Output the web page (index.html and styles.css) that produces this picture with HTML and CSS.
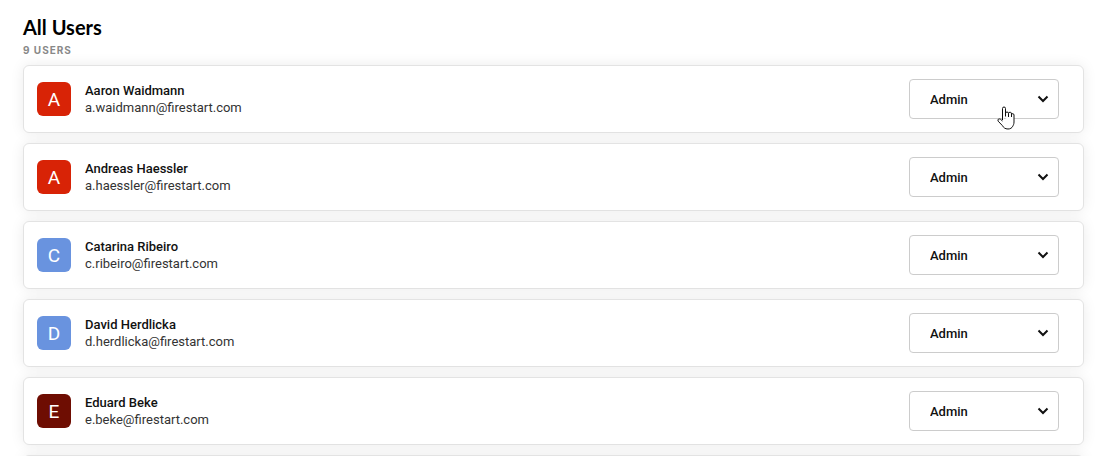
FILE: index.html
```html
<!DOCTYPE html>
<html lang="en">
<head>
    <meta charset="UTF-8">
    <meta name="viewport" content="width=device-width, initial-scale=1.0">
    <title>All Users</title>
    <link rel="stylesheet" href="styles.css">
</head>
<body>
    <main class="users">
        <h1 class="users-title">All Users</h1>
        <p class="users-count">9 users</p>

        <ul class="user-list">
            <li class="user-card">
                <span class="avatar avatar-red" aria-hidden="true">A</span>
                <div class="user-info">
                    <label class="user-name" for="role-1">Aaron Waidmann</label>
                    <span class="user-email">a.waidmann@firestart.com</span>
                </div>
                <div class="role">
                    <select class="role-select" id="role-1">
                        <option>Admin</option>
                    </select>
                    <svg class="role-arrow" viewBox="0 0 12 8" aria-hidden="true"><path d="M1.5 1.5 6 6l4.5-4.5"/></svg>
                    <svg class="pointer" viewBox="0 0 18 24" aria-hidden="true"><path d="M5.500 14V2.500a1.500 1.500 0 0 1 3 0V10.500M8.500 7.500a1.400 1.400 0 0 1 3 0v3.500M11.500 7.500a1.400 1.400 0 0 1 3 .5v3M14.500 8.500a1.300 1.300 0 0 1 2.500.5V16c0 2-.6 3-1.200 4.200-.9 1.800-2.500 2.800-4.800 2.800-3 0-4.500-1.500-5.700-3.500L1.200 15.200c-1-1.700.6-3 2.200-2L5.500 15"/></svg>
                </div>
            </li>
            <li class="user-card">
                <span class="avatar avatar-red" aria-hidden="true">A</span>
                <div class="user-info">
                    <label class="user-name" for="role-2">Andreas Haessler</label>
                    <span class="user-email">a.haessler@firestart.com</span>
                </div>
                <div class="role">
                    <select class="role-select" id="role-2">
                        <option>Admin</option>
                    </select>
                    <svg class="role-arrow" viewBox="0 0 12 8" aria-hidden="true"><path d="M1.5 1.5 6 6l4.5-4.5"/></svg>
                </div>
            </li>
            <li class="user-card">
                <span class="avatar avatar-blue" aria-hidden="true">C</span>
                <div class="user-info">
                    <label class="user-name" for="role-3">Catarina Ribeiro</label>
                    <span class="user-email">c.ribeiro@firestart.com</span>
                </div>
                <div class="role">
                    <select class="role-select" id="role-3">
                        <option>Admin</option>
                    </select>
                    <svg class="role-arrow" viewBox="0 0 12 8" aria-hidden="true"><path d="M1.5 1.5 6 6l4.5-4.5"/></svg>
                </div>
            </li>
            <li class="user-card">
                <span class="avatar avatar-blue" aria-hidden="true">D</span>
                <div class="user-info">
                    <label class="user-name" for="role-4">David Herdlicka</label>
                    <span class="user-email">d.herdlicka@firestart.com</span>
                </div>
                <div class="role">
                    <select class="role-select" id="role-4">
                        <option>Admin</option>
                    </select>
                    <svg class="role-arrow" viewBox="0 0 12 8" aria-hidden="true"><path d="M1.5 1.5 6 6l4.5-4.5"/></svg>
                </div>
            </li>
            <li class="user-card">
                <span class="avatar avatar-maroon" aria-hidden="true">E</span>
                <div class="user-info">
                    <label class="user-name" for="role-5">Eduard Beke</label>
                    <span class="user-email">e.beke@firestart.com</span>
                </div>
                <div class="role">
                    <select class="role-select" id="role-5">
                        <option>Admin</option>
                    </select>
                    <svg class="role-arrow" viewBox="0 0 12 8" aria-hidden="true"><path d="M1.5 1.5 6 6l4.5-4.5"/></svg>
                </div>
            </li>
            <li class="user-card"></li>
        </ul>
    </main>
</body>
</html>
```
FILE: styles.css
```css
* {
    box-sizing: border-box;
}

body {
    margin: 0;
    height: 100vh;
    overflow: hidden;
    background: #fff;
    color: #111;
    font-family: Roboto, "Liberation Sans", sans-serif;
    font-size: 13px;
}

.users {
    padding: 14px 21px 0 23px;
}

.users-title {
    margin: 0;
    font-family: Lato, "Open Sans", sans-serif;
    font-size: 20px;
    font-weight: 700;
    line-height: 26px;
    color: #000;
}

.users-count {
    margin: 3px 0 8px;
    font-family: Inter, sans-serif;
    font-size: 10px;
    font-weight: 700;
    line-height: 14px;
    letter-spacing: 1px;
    text-transform: uppercase;
    color: #888;
}

.user-list {
    display: flex;
    flex-direction: column;
    gap: 10px;
    margin: 0;
    padding: 0;
    list-style: none;
}

.user-card {
    display: flex;
    align-items: center;
    gap: 14px;
    min-height: 68px;
    padding: 13px 24px 13px 13px;
    background: #fff;
    border: 1px solid #e3e3e3;
    border-radius: 6px;
    box-shadow: 0 0 14px rgba(0, 0, 0, 0.08);
}

.avatar {
    display: flex;
    align-items: center;
    justify-content: center;
    width: 34px;
    height: 34px;
    border-radius: 6px;
    color: #fff;
    font-size: 19px;
}

.avatar-red {
    background: #d82306;
}

.avatar-blue {
    background: #6993df;
}

.avatar-maroon {
    background: #6e0d02;
}

.user-info {
    flex: 1;
    display: flex;
    flex-direction: column;
    line-height: 17px;
}

.user-name {
    font-weight: 500;
    color: #111;
}

.user-email {
    color: #333;
}

.role {
    position: relative;
    width: 150px;
}

.role-select {
    display: block;
    width: 100%;
    height: 40px;
    padding: 0 40px 0 20px;
    appearance: none;
    background: #fff;
    border: 1px solid #ccc;
    border-radius: 4px;
    color: #111;
    font: 500 13px Roboto, "Liberation Sans", sans-serif;
    cursor: pointer;
}

.role-arrow {
    position: absolute;
    top: 16px;
    right: 10px;
    width: 12px;
    height: 8px;
    fill: none;
    stroke: #111;
    stroke-width: 2;
    pointer-events: none;
}

.pointer {
    position: absolute;
    top: 27px;
    left: 88px;
    width: 18px;
    height: 24px;
    fill: #fff;
    stroke: #111;
    stroke-width: 1;
    stroke-linejoin: round;
    pointer-events: none;
}
```
